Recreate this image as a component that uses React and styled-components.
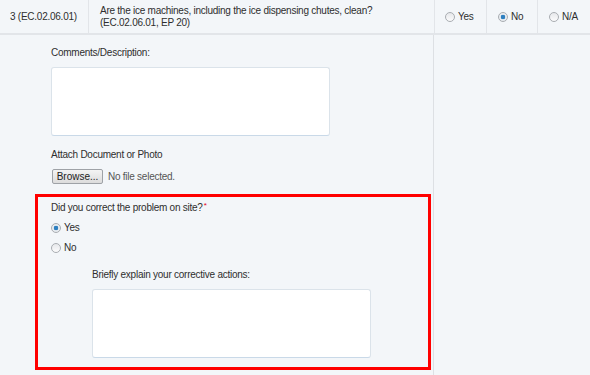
import styled, { createGlobalStyle } from 'styled-components'

const GlobalStyle = createGlobalStyle`
    html, body {
        margin: 0;
        padding: 0;
        background: #f3f6f9;
    }
    body {
        font-family: "Liberation Sans", Arial, sans-serif;
        font-size: 10px;
        letter-spacing: -0.25px;
        color: #2e2e2e;
    }
`

const Page = styled.div`
    width: 590px;
    height: 375px;
    overflow: hidden;
    background: #f3f6f9;
`

const QuestionRow = styled.div`
    display: grid;
    grid-template-columns: 88px 346px 52px 51px 53px;
    height: 33px;
    border-bottom: 2px solid #e2e5e9;
`

const Cell = styled.div`
    display: flex;
    align-items: center;
    padding-left: ${props => props.pad || 10}px;
    border-left: ${props => props.first ? 'none' : '1px solid #e2e5e9'};
    line-height: 12px;
`

const Radio = styled.span`
    display: inline-block;
    box-sizing: border-box;
    width: 10px;
    height: 10px;
    border-radius: 50%;
    border: 1px solid #a9adb2;
    background: ${props => props.checked
        ? 'radial-gradient(circle, #2d7fc0 0, #2d7fc0 2px, #e8ecf0 2.6px)'
        : 'linear-gradient(#e6e8eb, #fbfbfc)'};
    margin-right: 3px;
    flex-shrink: 0;
`

const RadioLabel = styled.label`
    display: flex;
    align-items: center;
    line-height: 14px;
    height: 14px;
`

const DetailRow = styled.div`
    display: grid;
    grid-template-columns: 434px 1fr;
    height: 340px;
`

const DetailCell = styled.div`
    border-right: 1px solid #dde0e4;
    padding: 11px 0 0 51px;
    display: flex;
    flex-direction: column;
`

const Label = styled.div`
    line-height: 14px;
    height: 14px;
    margin-top: ${props => props.mt || 0}px;
    white-space: nowrap;
`

const Required = styled.span`
    color: #e0001b;
    font-size: 8px;
    vertical-align: top;
    line-height: 10px;
    margin-left: 1px;
`

const TextArea = styled.textarea`
    box-sizing: border-box;
    width: 279px;
    height: 69px;
    margin: 7px 0 0 0;
    border: 1px solid #dbe3ea;
    border-bottom-color: #c9d9e8;
    border-radius: 3px;
    background: #fff;
    resize: none;
    display: block;
    font: inherit;
    outline: none;
`

const FileRow = styled.div`
    display: flex;
    align-items: center;
    margin-top: 7px;
    height: 15px;
    color: #555;
`

const BrowseButton = styled.button`
    box-sizing: border-box;
    height: 15px;
    width: 51px;
    padding: 0;
    margin: 0 5px 0 1px;
    font: inherit;
    color: #222;
    border: 1px solid #9ea2a7;
    border-radius: 2px;
    background: linear-gradient(#f4f4f4, #dcdcdc);
`

const Highlight = styled.div`
    box-sizing: border-box;
    width: 396px;
    margin: 10px 0 0 -16px;
    border: 3px solid #ff0000;
    padding: 2px 0 9px 13px;
    display: flex;
    flex-direction: column;
`

const OptionList = styled.div`
    display: flex;
    flex-direction: column;
    gap: 6px;
    margin-top: 6px;
`

const Indented = styled.div`
    padding-left: 41px;
    margin-top: 13px;
`

function App() {
    return (
        <Page>
            <GlobalStyle />
            <QuestionRow>
                <Cell first pad={10}>3 (EC.02.06.01)</Cell>
                <Cell pad={11}>Are the ice machines, including the ice dispensing chutes, clean?<br />(EC.02.06.01, EP 20)</Cell>
                <Cell pad={10}><RadioLabel><Radio />Yes</RadioLabel></Cell>
                <Cell pad={11}><RadioLabel><Radio checked />No</RadioLabel></Cell>
                <Cell pad={11}><RadioLabel><Radio />N/A</RadioLabel></Cell>
            </QuestionRow>
            <DetailRow>
                <DetailCell>
                    <Label>Comments/Description:</Label>
                    <TextArea />
                    <Label mt={12}>Attach Document or Photo</Label>
                    <FileRow>
                        <BrowseButton>Browse...</BrowseButton>
                        No file selected.
                    </FileRow>
                    <Highlight>
                        <Label mt={2}>Did you correct the problem on site?<Required>*</Required></Label>
                        <OptionList>
                            <RadioLabel><Radio checked />Yes</RadioLabel>
                            <RadioLabel><Radio />No</RadioLabel>
                        </OptionList>
                        <Indented>
                            <Label>Briefly explain your corrective actions:</Label>
                            <TextArea />
                        </Indented>
                    </Highlight>
                </DetailCell>
                <div />
            </DetailRow>
        </Page>
    )
}

export default App
